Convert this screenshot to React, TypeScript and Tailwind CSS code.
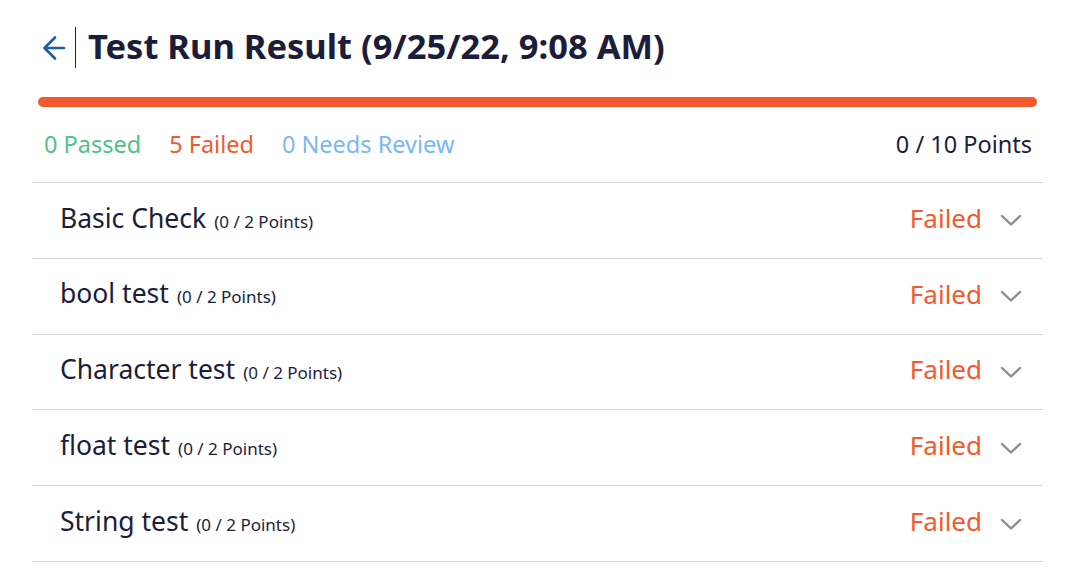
const tests = [
  { name: "Basic Check", earned: 0, total: 2 },
  { name: "bool test", earned: 0, total: 2 },
  { name: "Character test", earned: 0, total: 2 },
  { name: "float test", earned: 0, total: 2 },
  { name: "String test", earned: 0, total: 2 },
];

function Chevron() {
  return (
    <svg width="22" height="12" viewBox="0 0 22 12" fill="none" className="text-[#8c8c8c]">
      <path d="M2 2l9 8.5L20 2" stroke="currentColor" strokeWidth="2.4" strokeLinecap="round" strokeLinejoin="round" />
    </svg>
  );
}

function ResultRow({ name, earned, total }: { name: string; earned: number; total: number }) {
  return (
    <div className="flex items-center justify-between h-[75.8px] border-b border-[#d9d9d9] pl-7 pr-[21px]">
      <div className="flex items-baseline gap-2 text-[#1b1d3a] -mt-1">
        <span className="text-[26.5px]">{name}</span>
        <span className="text-[17px]">
          ({earned} / {total} Points)
        </span>
      </div>
      <div className="flex items-center gap-[18px]">
        <span className="text-[26px] text-[#f4592b] -mt-1">Failed</span>
        <Chevron />
      </div>
    </div>
  );
}

export default function App() {
  return (
    <div
      className="min-h-screen bg-white pl-8 pr-[44px] pt-[27px]"
      style={{ fontFamily: '"Noto Sans", "Open Sans", sans-serif' }}
    >
      <div className="flex items-center h-[41px]">
        <button className="pl-[10px] pr-[9px] text-[#1d5fa8]">
          <svg width="24" height="26" viewBox="0 0 24 26" fill="none">
            <path d="M22 13H3M13 2.5L2.5 13 13 23.5" stroke="currentColor" strokeWidth="2.6" strokeLinecap="round" strokeLinejoin="round" />
          </svg>
        </button>
        <div className="h-[41px] border-l border-[#1b1d3a]" />
        <h1 className="ml-3 text-[34.5px] font-bold text-[#1b1d3a] leading-none -mt-0.5">
          Test Run Result (9/25/22, 9:08 AM)
        </h1>
      </div>

      <div className="mx-1.5 mt-[29px] h-2.5 rounded-full bg-[#f4592b]" />

      <div className="flex items-center justify-between h-[75px] pl-3 pr-[11px] text-[23.5px]">
        <div className="flex gap-[28px]">
          <span className="text-[#4cc38a]">0 Passed</span>
          <span className="text-[#f4592b]">5 Failed</span>
          <span className="text-[#7ab8f5]">0 Needs Review</span>
        </div>
        <span className="text-[#1b1d3a]">0 / 10 Points</span>
      </div>

      <div className="border-t border-[#d9d9d9]">
        {tests.map((t) => (
          <ResultRow key={t.name} {...t} />
        ))}
      </div>
    </div>
  );
}
